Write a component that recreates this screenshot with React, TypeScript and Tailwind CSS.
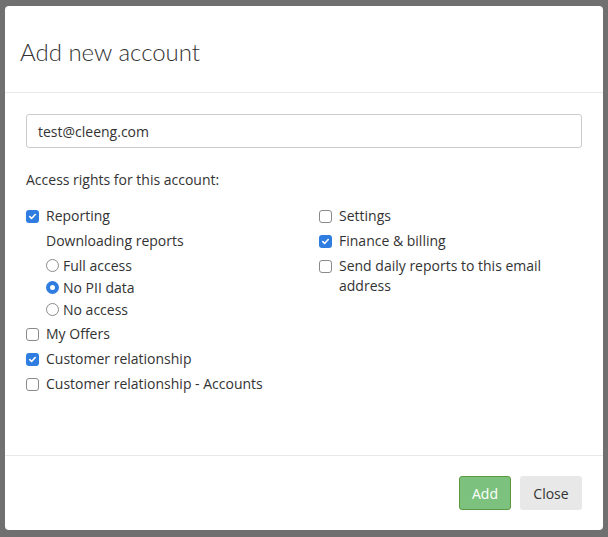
import React from "react";

const Check = ({ on }: { on?: boolean }) =>
  on ? (
    <span className="w-[13px] h-[13px] rounded-[3px] bg-[#2f7de1] flex items-center justify-center shrink-0">
      <svg width="9" height="9" viewBox="0 0 10 10"><path d="M2 5.2l2 2L8 2.8" stroke="white" strokeWidth="1.8" fill="none" strokeLinecap="round" strokeLinejoin="round" /></svg>
    </span>
  ) : (
    <span className="block w-[13px] h-[13px] rounded-[3px] border border-[#8a8a8a] bg-white shrink-0" />
  );

const Radio = ({ on }: { on?: boolean }) =>
  on ? (
    <span className="w-[13px] h-[13px] rounded-full bg-[#2f7de1] flex items-center justify-center shrink-0">
      <span className="block w-[5px] h-[5px] rounded-full bg-white" />
    </span>
  ) : (
    <span className="block w-[13px] h-[13px] rounded-full border border-[#8a8a8a] bg-white shrink-0" />
  );

const CItem = ({ on, children }: { on?: boolean; children: React.ReactNode }) => (
  <div className="flex items-start gap-[7px] leading-[20px]">
    <span className="mt-[4px] shrink-0"><Check on={on} /></span>
    <span>{children}</span>
  </div>
);

const RItem = ({ on, children }: { on?: boolean; children: React.ReactNode }) => (
  <div className="flex items-center gap-[4px] h-[22px]">
    <Radio on={on} />
    <span>{children}</span>
  </div>
);

export default function App() {
  return (
    <div className="w-[608px] h-[537px] bg-[#707070] flex flex-col" style={{ fontFamily: '"Open Sans", sans-serif' }}>
      <div className="h-[6px] shrink-0" />
      <div className="mx-[5px] w-[598px] h-[524px] bg-white rounded-[4px] flex flex-col text-[14px] text-[#333]">
        <div className="h-[87px] border-b border-[#e8e8e8] flex items-center px-[15px] pt-[6px]">
          <h1 className="text-[24px] font-light text-[#333]" style={{ fontFamily: 'Lato, sans-serif' }}>Add new account</h1>
        </div>
        <div className="flex-1 px-[21px] pt-[21px]">
          <div className="h-[34px] border border-[#ccc] rounded-[3px] flex items-center px-[11px]">test@cleeng.com</div>
          <div className="mt-[21px]">Access rights for this account:</div>
          <div className="mt-[16px] flex">
            <div className="w-[293px] flex flex-col">
              <CItem on>Reporting</CItem>
              <div className="pl-[20px] pt-[4px]">
                <div className="h-[22px] leading-[22px]">Downloading reports</div>
                <div className="pt-[2px]">
                  <RItem>Full access</RItem>
                  <RItem on>No PII data</RItem>
                  <RItem>No access</RItem>
                </div>
              </div>
              <div className="mt-[4px] flex flex-col gap-[5px]">
                <CItem>My Offers</CItem>
                <CItem on>Customer relationship</CItem>
                <CItem>Customer relationship - Accounts</CItem>
              </div>
            </div>
            <div className="flex-1 flex flex-col gap-[5px]">
              <CItem>Settings</CItem>
              <CItem on>Finance &amp; billing</CItem>
              <CItem>Send daily reports to this email address</CItem>
            </div>
          </div>
        </div>
        <div className="h-[75px] border-t border-[#e8e8e8] flex items-center justify-end gap-[9px] px-[21px]">
          <button className="w-[52px] h-[34px] rounded-[3px] bg-[#7cc27e] border border-[#5a9a3c] text-white">Add</button>
          <button className="w-[62px] h-[34px] rounded-[3px] bg-[#e8e8e8] text-[#333]">Close</button>
        </div>
      </div>
    </div>
  );
}
